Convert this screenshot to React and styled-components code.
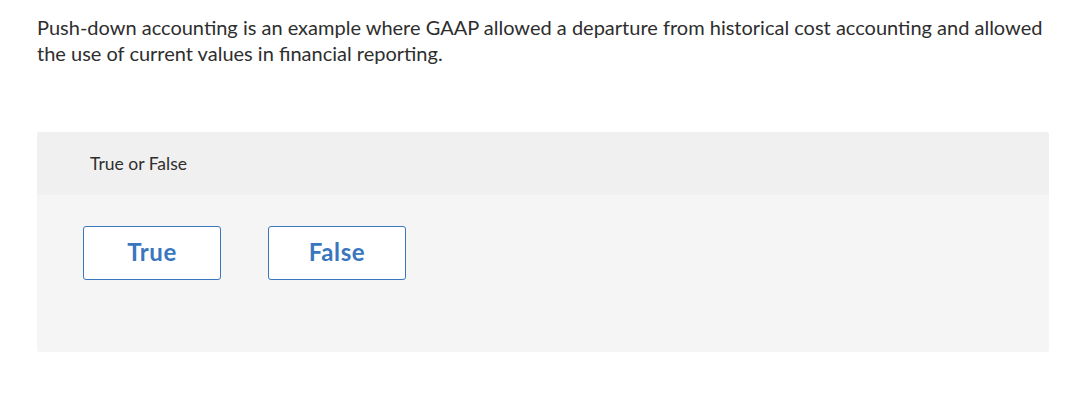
import React from "react";
import styled, { createGlobalStyle } from "styled-components";

const GlobalStyle = createGlobalStyle`
  body {
    margin: 0;
    background: #fff;
    font-family: Lato, "Open Sans", "Liberation Sans", sans-serif;
  }
`;

const Page = styled.div`
  padding: 14px 33px 0 37px;
`;

const Prompt = styled.p`
  margin: 0;
  font-size: 20px;
  line-height: 26px;
  color: #2e2e2e;
`;

const Panel = styled.div`
  margin-top: 66px;
  border-radius: 3px;
  overflow: hidden;
  background: #f5f5f5;
`;

const PanelHeader = styled.div`
  height: 63px;
  background: #f0f0f0;
  display: flex;
  align-items: center;
  padding-left: 53px;
  font-size: 17.5px;
  color: #2e2e2e;
`;

const Choices = styled.div`
  display: flex;
  gap: 47px;
  padding: 31px 0 72px 46px;
`;

const Choice = styled.button`
  width: 138px;
  height: 54px;
  padding: 0 0 4px;
  background: #fff;
  border: 1px solid #3a76bd;
  border-radius: 3px;
  font-family: inherit;
  font-size: 24px;
  font-weight: 700;
  letter-spacing: 0.6px;
  color: #3a76bd;
  cursor: pointer;
`;

export default function App() {
  return (
    <>
      <GlobalStyle />
      <Page>
        <Prompt>
          Push-down accounting is an example where GAAP allowed a departure from
          historical cost accounting and allowed the use of current values in
          financial reporting.
        </Prompt>
        <Panel>
          <PanelHeader>True or False</PanelHeader>
          <Choices>
            <Choice>True</Choice>
            <Choice>False</Choice>
          </Choices>
        </Panel>
      </Page>
    </>
  );
}
